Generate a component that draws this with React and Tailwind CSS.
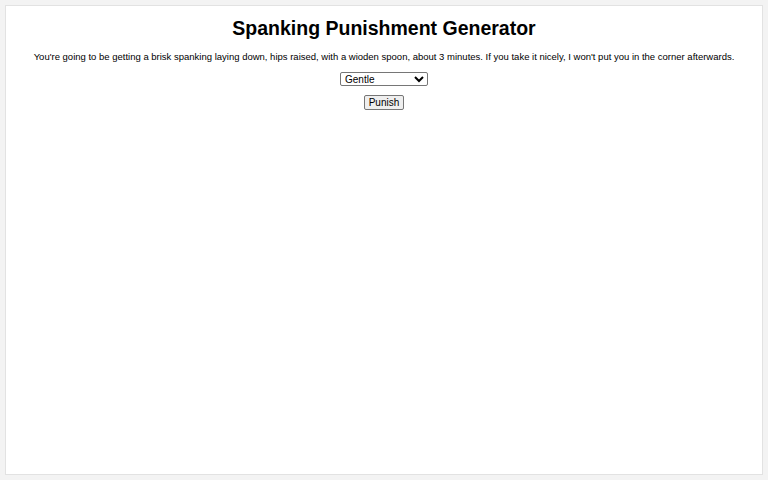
export default function App() {
  return (
    <div
      className="min-h-screen bg-[#f3f3f3] p-[5px]"
      style={{ fontFamily: '"Liberation Sans", Arial, sans-serif' }}
    >
      <div className="h-[470px] bg-white border border-[#e2e2e2] flex flex-col items-center pt-[11px]">
        <h1 className="text-[19.5px] leading-[22px] font-bold text-black">
          Spanking Punishment Generator
        </h1>
        <p className="mt-[12px] text-[9.5px] leading-[12px] text-black">
          You're going to be getting a brisk spanking laying down, hips raised, with a wioden spoon, about 3 minutes. If you take it nicely, I won't put you in the corner afterwards.
        </p>
        <select
          defaultValue="gentle"
          className="mt-[9px] w-[88px] h-[14px] text-[10px] leading-[12px] border border-[#767676] rounded-[2px] bg-white text-black"
        >
          <option value="gentle">Gentle</option>
          <option value="moderate">Moderate</option>
          <option value="harsh">Harsh</option>
        </select>
        <button className="mt-[9px] px-[4px] h-[15px] text-[10px] leading-[12px] border border-[#767676] rounded-[2px] bg-[#efefef] text-black">
          Punish
        </button>
      </div>
    </div>
  );
}
